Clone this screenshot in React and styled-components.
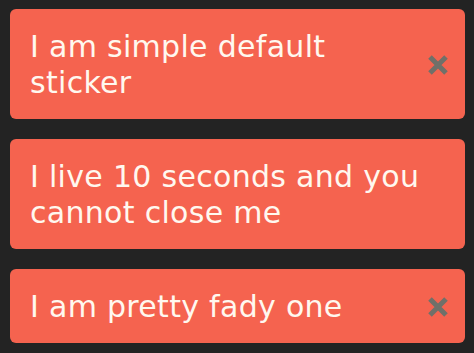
import React from 'react';
import styled, { createGlobalStyle } from 'styled-components';

const GlobalStyle = createGlobalStyle`
  html, body {
    margin: 0;
    padding: 0;
    background: #232323;
  }
`;

const stickers = [
  { id: 1, text: 'I am simple default sticker', closable: true },
  { id: 2, text: 'I live 10 seconds and you cannot close me', closable: false },
  { id: 3, text: 'I am pretty fady one', closable: true },
];

const CloseIcon = () => (
  <svg width="22" height="22" viewBox="0 0 22 22">
    <path
      d="M3 3 L19 19 M19 3 L3 19"
      stroke="currentColor"
      strokeWidth="5"
      strokeLinecap="butt"
      fill="none"
    />
  </svg>
);

const App = () => {
  return (
    <Page>
      <GlobalStyle />
      <StickerList>
        {stickers.map((s) => (
          <Sticker key={s.id}>
            <Message>{s.text}</Message>
            {s.closable && (
              <CloseButton aria-label="close">
                <CloseIcon />
              </CloseButton>
            )}
          </Sticker>
        ))}
      </StickerList>
    </Page>
  );
};

export default App;

const Page = styled.div`
  width: 474px;
  height: 353px;
  background: #232323;
  overflow: hidden;
  box-sizing: border-box;
  padding: 9px 9px 0 10px;
`;

const StickerList = styled.div`
  display: flex;
  flex-direction: column;
  gap: 20px;
  width: 455px;
`;

const Sticker = styled.div`
  display: flex;
  align-items: center;
  gap: 12px;
  background: #f5634f;
  border-radius: 6px;
  padding: 20px 15px 18px 20px;
`;

const Message = styled.div`
  flex: 1;
  font-family: 'DejaVu Sans', Verdana, sans-serif;
  font-size: 30px;
  line-height: 36px;
  letter-spacing: 0.3px;
  color: #fff8ef;
`;

const CloseButton = styled.div`
  display: flex;
  align-items: center;
  justify-content: center;
  width: 24px;
  height: 24px;
  color: #707069;
  cursor: pointer;
`;
